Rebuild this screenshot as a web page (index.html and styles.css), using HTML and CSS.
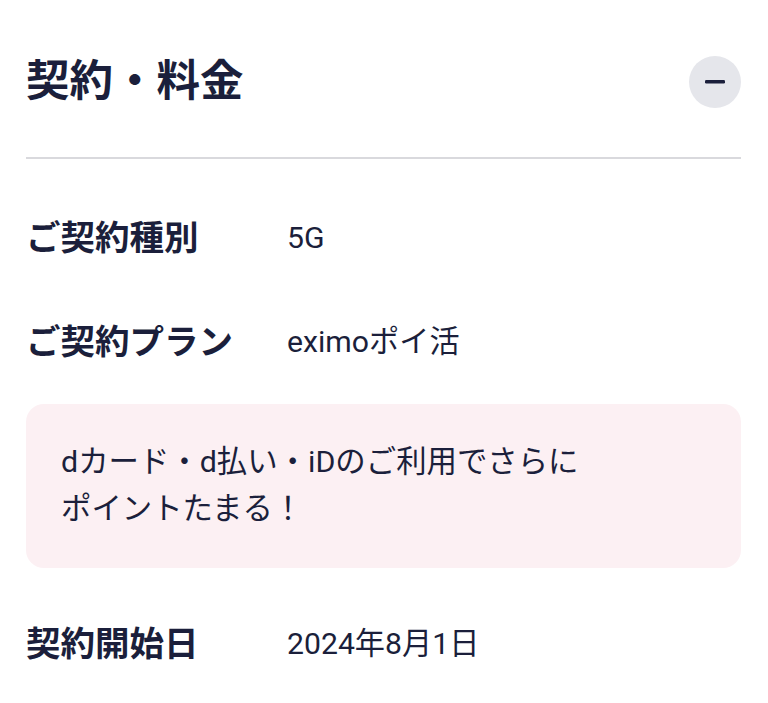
FILE: index.html
```html
<!DOCTYPE html>
<html lang="ja">
<head>
<meta charset="utf-8">
<link rel="stylesheet" href="styles.css">
</head>
<body>
<section class="panel">
  <header class="head">
    <h2 class="title">契約・料金</h2>
    <button class="toggle" aria-label="閉じる">
      <svg width="20" height="4" viewBox="0 0 20 4"><rect x="0" y="0" width="20" height="3.4" rx="1.2" fill="#1b1f3b"/></svg>
    </button>
  </header>
  <div class="rule"></div>
  <dl class="list">
    <div class="row"><dt>ご契約種別</dt><dd>5G</dd></div>
    <div class="row"><dt>ご契約プラン</dt><dd>eximoポイ活</dd></div>
    <div class="note">dカード・d払い・iDのご利用でさらに<br>ポイントたまる！</div>
    <div class="row row-last"><dt>契約開始日</dt><dd>2024年8月1日</dd></div>
  </dl>
</section>
</body>
</html>
```

FILE: styles.css
```css
html, body {
  margin: 0;
  padding: 0;
  background: #ffffff;
}
body {
  font-family: Roboto, "Noto Sans CJK JP", sans-serif;
  color: #1b1f3b;
}
.panel {
  padding: 0 27px 0 26px;
}
.head {
  display: flex;
  align-items: center;
  justify-content: space-between;
  height: 157px;
  padding-top: 6px;
  box-sizing: border-box;
}
.title {
  margin: 0;
  font-size: 43.5px;
  line-height: 52px;
  font-weight: 700;
  letter-spacing: 0;
}
.toggle {
  width: 52px;
  height: 52px;
  border-radius: 50%;
  border: none;
  background: #e5e6eb;
  display: flex;
  align-items: center;
  justify-content: center;
  padding: 0;
}
.rule {
  height: 2px;
  background: #d9d9dd;
}
.list {
  margin: 0;
  padding-top: 27px;
}
.row {
  display: flex;
  align-items: center;
  padding: 26px 0;
  line-height: 52px;
}
.row dt {
  width: 261px;
  flex-shrink: 0;
  font-size: 34.5px;
  font-weight: 700;
}
.row dd {
  margin: 0;
  font-size: 30.2px;
}
.note {
  margin-top: 10px;
  background: #fcf0f3;
  border-radius: 18px;
  padding: 34px 35px 36px;
  font-size: 30.4px;
  line-height: 47px;
}
.row-last {
  margin-top: 24px;
}
```
